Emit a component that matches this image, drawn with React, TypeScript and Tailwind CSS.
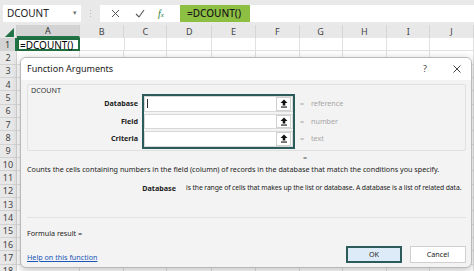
import React from "react";

const cols = [
  { n: "A", w: 63 },
  { n: "B", w: 45 },
  { n: "C", w: 43 },
  { n: "D", w: 45 },
  { n: "E", w: 44 },
  { n: "F", w: 44 },
  { n: "G", w: 43 },
  { n: "H", w: 45 },
  { n: "I", w: 43 },
  { n: "J", w: 44 },
];

const font = { fontFamily: '"Noto Sans", "Open Sans", Arial, sans-serif' };

function UpArrow() {
  return (
    <svg width="8" height="9" viewBox="0 0 8 9">
      <path d="M4 0.5 L7.5 4 L5.3 4 L5.3 6.5 L2.7 6.5 L2.7 4 L0.5 4 Z" fill="#111" />
      <rect x="1" y="7.5" width="6" height="1.1" fill="#111" />
    </svg>
  );
}

function ArgRow({ first }: { first?: boolean }) {
  return (
    <div className="flex h-[15.5px] items-center border border-[#d8d8d8] bg-white">
      <div className="flex-1 pl-[2px]">
        {first && <div className="h-[9px] w-px bg-[#333]" />}
      </div>
      <div className="mr-px flex h-[13.5px] w-[15px] items-center justify-center border border-[#d0d0d0] bg-white">
        <UpArrow />
      </div>
    </div>
  );
}

const labels = ["Database", "Field", "Criteria"];
const vals = ["reference", "number", "text"];

export default function App() {
  return (
    <div className="relative h-[271px] w-[474px] overflow-hidden bg-white" style={font}>
      {/* formula bar */}
      <div className="flex h-[25px] items-center bg-[#e9e9e9] pt-[1px]">
        <div className="ml-[3px] flex h-[17px] w-[78px] items-center justify-between bg-white pl-[4px] pr-[4px]">
          <span className="text-[10px] text-[#222]">DCOUNT</span>
          <span className="text-[7px] text-[#777]">▾</span>
        </div>
        <div className="flex w-[19px] flex-col items-center gap-[2px]">
          <div className="h-[1px] w-[1px] bg-[#bbb]" />
          <div className="h-[1px] w-[1px] bg-[#bbb]" />
          <div className="h-[1px] w-[1px] bg-[#bbb]" />
        </div>
        <div className="flex h-[17px] flex-1 items-center bg-white">
          <div className="flex w-[80px] items-center">
            <svg className="ml-[11px]" width="9" height="9" viewBox="0 0 9 9">
              <path d="M1 1 L8 8 M8 1 L1 8" stroke="#555" strokeWidth="1" />
            </svg>
            <svg className="ml-[15px]" width="10" height="9" viewBox="0 0 10 9">
              <path d="M1 5 L4 8 L9 1" stroke="#555" strokeWidth="1.1" fill="none" />
            </svg>
            <span
              className="ml-[13px] text-[10px] italic text-[#2e7d3a]"
              style={{ fontFamily: '"Liberation Serif", serif' }}
            >
              f<span className="text-[7px]">x</span>
            </span>
          </div>
          <div className="flex h-[17px] w-[70px] items-center bg-[#8dbf43] pl-[7px] text-[10px] font-medium text-[#1a1a1a]">
            =DCOUNT()
          </div>
        </div>
      </div>

      {/* column headers */}
      <div className="flex h-[13px] bg-[#e8e8e8]">
        <div className="relative w-[17px] border-r border-[#cfcfcf]">
          <div
            className="absolute bottom-[1px] right-[2px] h-[9px] w-[9px] bg-[#217346]"
            style={{ clipPath: "polygon(100% 0, 100% 100%, 0 100%)" }}
          />
        </div>
        {cols.map((c, i) => (
          <div
            key={c.n}
            style={{ width: c.w }}
            className={
              i === 0
                ? "flex items-center justify-center border-b-2 border-r border-[#217346] border-r-[#cfcfcf] bg-[#d3d3d3] text-[9px] text-[#333]"
                : "flex items-center justify-center border-r border-[#d6d6d6] text-[9px] text-[#444]"
            }
          >
            {c.n}
          </div>
        ))}
      </div>

      {/* rows */}
      {Array.from({ length: 18 }).map((_, r) => (
        <div key={r} className="flex h-[13.33px]">
          <div
            className={
              r === 0
                ? "flex w-[17px] items-center justify-center border-r-2 border-[#217346] bg-[#d3d3d3] text-[9px] text-[#333]"
                : "flex w-[17px] items-center justify-center border-r border-b border-[#d3d3d3] bg-[#e8e8e8] text-[9px] leading-none text-[#444]"
            }
          >
            {r + 1}
          </div>
          {cols.map((c, i) => (
            <div
              key={c.n}
              style={{ width: c.w }}
              className={
                r === 0 && i === 0
                  ? "flex items-center border-2 border-[#1e6e42] pl-[1px] text-[10px] leading-none text-black"
                  : "border-r border-b border-[#e1e1e1]"
              }
            >
              {r === 0 && i === 0 ? "=DCOUNT()" : null}
            </div>
          ))}
        </div>
      ))}

      {/* dialog */}
      <div className="absolute left-[20px] top-[57px] flex h-[211px] w-[452px] flex-col overflow-hidden rounded-[6px] border border-[#b9b9b9] bg-[#f3f3f3] shadow-[0_2px_8px_rgba(0,0,0,0.25)]">
        <div className="flex h-[22px] items-center bg-white pl-[6px] pr-[10px]">
          <span className="flex-1 text-[9px] text-[#222]">Function Arguments</span>
          <span className="mr-[26px] text-[9px] text-[#444]">?</span>
          <svg width="8" height="8" viewBox="0 0 8 8">
            <path d="M0.5 0.5 L7.5 7.5 M7.5 0.5 L0.5 7.5" stroke="#333" strokeWidth="0.9" />
          </svg>
        </div>

        <div className="flex flex-1 flex-col pl-[6px] pr-[5px] pt-[4px]">
          {/* group box */}
          <div className="flex h-[67px] flex-col rounded-[2px] border border-[#e0e0e0] pl-[3px] pr-[4px]">
            <div className="h-[9px] pt-[1px] text-[7.2px] leading-[9px] text-[#333]">DCOUNT</div>
            <div className="flex">
              <div className="flex w-[111px] flex-col items-end gap-[2px] pr-[4px] pt-[2px] text-[7.2px] font-bold text-[#222]">
                {labels.map((l) => (
                  <div key={l} className="flex h-[15.5px] items-center">
                    {l}
                  </div>
                ))}
              </div>
              <div className="flex w-[153px] flex-col gap-[2px] border-2 border-[#2c5b5c] p-0">
                <ArgRow first />
                <ArgRow />
                <ArgRow />
              </div>
              <div className="flex flex-col gap-[2px] pl-[5px] pt-[2px] text-[7.2px] text-[#a6a6a6]">
                {vals.map((v) => (
                  <div key={v} className="flex h-[15.5px] items-center">
                    <span className="w-[11px]">=</span>
                    {v}
                  </div>
                ))}
              </div>
            </div>
          </div>

          <div className="mt-[1px] pl-[276px] text-[7.2px] leading-[10px] text-[#555]">=</div>
          <div className="mt-[2px] text-[7.2px] leading-[10px] text-[#222]">
            Counts the cells containing numbers in the field (column) of records in the database that match the conditions you specify.
          </div>
          <div className="mt-[9px] flex whitespace-nowrap text-[7.2px] leading-[10px] text-[#222]">
            <span className="w-[159px] shrink-0 pr-[10px] text-right font-bold">Database</span>
            <span className="text-[6.8px] tracking-[-0.1px]">
              is the range of cells that makes up the list or database. A database is a list of related data.
            </span>
          </div>

          <div className="mt-[24px] h-px bg-[#e2e2e2]" />
          <div className="mt-[10px] text-[7.2px] leading-[10px] text-[#222]">Formula result =</div>
          <div className="mt-auto flex items-end">
            <span className="mb-[5px] flex-1 text-[7.2px] leading-[10px] text-[#1a56b8] underline">
              Help on this function
            </span>
            <div className="mb-[4px] flex h-[17px] w-[56px] items-center justify-center border-2 border-[#2c5b5c] bg-[#dcebf7] text-[7.2px] text-[#222]">
              OK
            </div>
            <div className="mb-[4px] ml-[8px] flex h-[17px] w-[56px] items-center justify-center border border-[#d0d0d0] bg-white text-[7.2px] text-[#222]">
              Cancel
            </div>
          </div>
        </div>
      </div>
    </div>
  );
}
